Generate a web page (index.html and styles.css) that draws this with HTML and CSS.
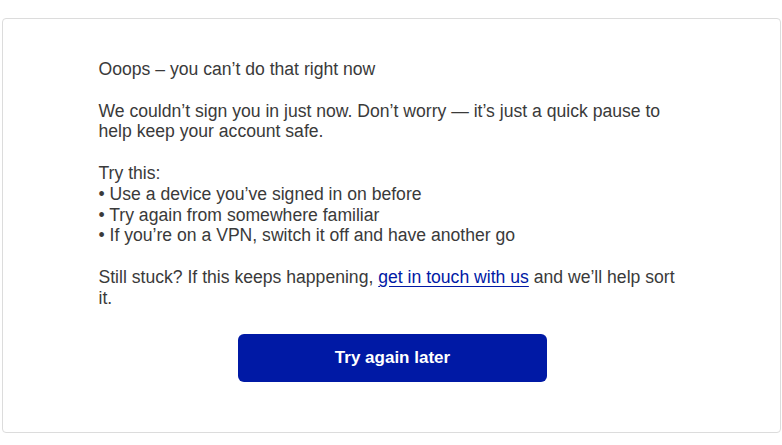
FILE: index.html
```html
<!DOCTYPE html>
<html lang="en">
<head>
<meta charset="utf-8">
<title>Ooops</title>
<link rel="stylesheet" href="styles.css">
</head>
<body>
<main class="card">
  <div class="content">
    <p class="title">Ooops – you can’t do that right now</p>
    <p>We couldn’t sign you in just now. Don’t worry — it’s just a quick pause to help keep your account safe.</p>
    <p>Try this:<br>• Use a device you’ve signed in on before<br>• Try again from somewhere familiar<br>• If you’re on a VPN, switch it off and have another go</p>
    <p>Still stuck? If this keeps happening, <a href="#" class="link">get in touch with us</a> and we’ll help sort it.</p>
    <div class="actions">
      <button class="btn" type="button">Try again later</button>
    </div>
  </div>
</main>
</body>
</html>
```
FILE: styles.css
```css
html, body {
  margin: 0;
  padding: 0;
  background: #fff;
}
body {
  padding: 18px 1px 12px 2px;
  font-family: "Liberation Sans", Arial, sans-serif;
  color: #3a3a3a;
}
.card {
  box-sizing: border-box;
  height: 415px;
  border: 1px solid #dcdcdc;
  border-radius: 4px;
  padding: 40px 0 0;
  display: flex;
  justify-content: center;
}
.content {
  width: 592px;
  padding-left: 3px;
  padding-right: 3px;
  box-sizing: border-box;
  font-size: 17.6px;
  line-height: 20.8px;
}
.content p {
  margin: 0 0 20.8px;
}
.link {
  color: #0019a5;
  text-decoration: underline;
  text-underline-offset: 3px;
}
.actions {
  display: flex;
  justify-content: center;
  padding-top: 5px;
  padding-left: 2px;
}
.btn {
  width: 309px;
  height: 48px;
  border: none;
  border-radius: 6px;
  background: #0019a5;
  color: #fff;
  font-family: "Liberation Sans", Arial, sans-serif;
  font-weight: bold;
  font-size: 17px;
}
```
